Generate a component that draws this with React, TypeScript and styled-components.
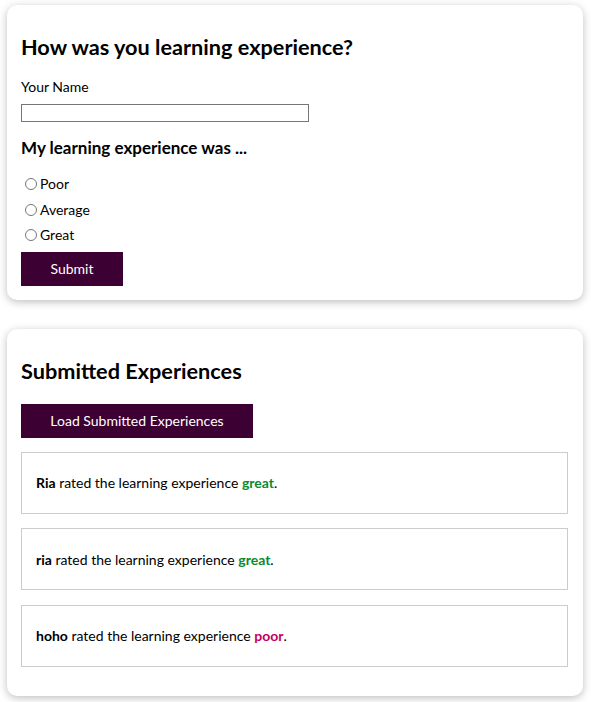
import React, { useState } from "react";
import styled, { createGlobalStyle } from "styled-components";

type Rating = "poor" | "average" | "great";

type Experience = {
  name: string
  rating: Rating
}

const GlobalStyle = createGlobalStyle`
  body {
    margin: 0;
    background: #fff;
    font-family: Lato, "Noto Sans CJK KR", sans-serif;
    color: #000;
  }
`

const Page = styled.div`
  padding: 5px 8px 6px 7px;
  display: flex;
  flex-direction: column;
  gap: 29px;
`

const Card = styled.section`
  background: #fff;
  border-radius: 10px;
  box-shadow: 0 2px 8px rgba(0, 0, 0, 0.26);
  padding: 14px 15px 14px 14px;
`

const Heading = styled.h2`
  margin: 14px 0 19px;
  font-size: 21.7px;
  font-weight: 700;
  line-height: 28px;
`

const Label = styled.label`
  display: block;
  font-size: 14px;
  line-height: 14px;
  margin-bottom: 10px;
`

const TextInput = styled.input`
  display: block;
  width: 288px;
  height: 18px;
  box-sizing: border-box;
  border: 1px solid #767676;
  padding: 0 2px;
  margin: 0;
`

const SubHeading = styled.h3`
  margin: 14px 0;
  font-size: 17px;
  font-weight: 700;
  line-height: 24px;
`

const Options = styled.div`
  display: flex;
  flex-direction: column;
  gap: 5px;
  margin-bottom: 6px;
`

const Option = styled.label`
  display: flex;
  align-items: center;
  font-size: 14px;
  line-height: 20.5px;
  gap: 3px;

  input {
    margin: 0 0 0 4px;
    width: 12px;
    height: 12px;
  }
`

const Button = styled.button<{ width: number }>`
  width: ${({ width }) => width}px;
  height: 34px;
  background: #3c0033;
  color: #fff;
  border: none;
  font-family: inherit;
  font-size: 14px;
  cursor: pointer;
  display: block;
`

const List = styled.div`
  display: flex;
  flex-direction: column;
  gap: 14.5px;
  margin-top: 14px;
  margin-bottom: 15px;
`

const Item = styled.div`
  border: 1px solid #ccc;
  height: 62px;
  box-sizing: border-box;
  padding: 0 14px;
  display: flex;
  align-items: center;
  font-size: 14px;
`

const RatingText = styled.span<{ rating: Rating }>`
  font-weight: 700;
  color: ${({ rating }) => (rating === "poor" ? "#c3005c" : rating === "great" ? "#0a8a2c" : "#555")};
`

const experiences: Experience[] = [
  { name: "Ria", rating: "great" },
  { name: "ria", rating: "great" },
  { name: "hoho", rating: "poor" },
]

export default function App() {
  const [rating, setRating] = useState<Rating | null>(null)

  return (
    <>
      <GlobalStyle />
      <Page>
        <Card>
          <Heading>How was you learning experience?</Heading>
          <Label htmlFor="name">Your Name</Label>
          <TextInput id="name" type="text" />
          <SubHeading>My learning experience was ...</SubHeading>
          <Options>
            {(["poor", "average", "great"] as Rating[]).map((r) => (
              <Option key={r}>
                <input
                  type="radio"
                  name="rating"
                  checked={rating === r}
                  onChange={() => setRating(r)}
                />
                {r[0].toUpperCase() + r.slice(1)}
              </Option>
            ))}
          </Options>
          <Button width={102}>Submit</Button>
        </Card>

        <Card>
          <Heading>Submitted Experiences</Heading>
          <Button width={232}>Load Submitted Experiences</Button>
          <List>
            {experiences.map((e, i) => (
              <Item key={i}>
                <span>
                  <b>{e.name}</b> rated the learning experience{" "}
                  <RatingText rating={e.rating}>{e.rating}</RatingText>.
                </span>
              </Item>
            ))}
          </List>
        </Card>
      </Page>
    </>
  );
}
